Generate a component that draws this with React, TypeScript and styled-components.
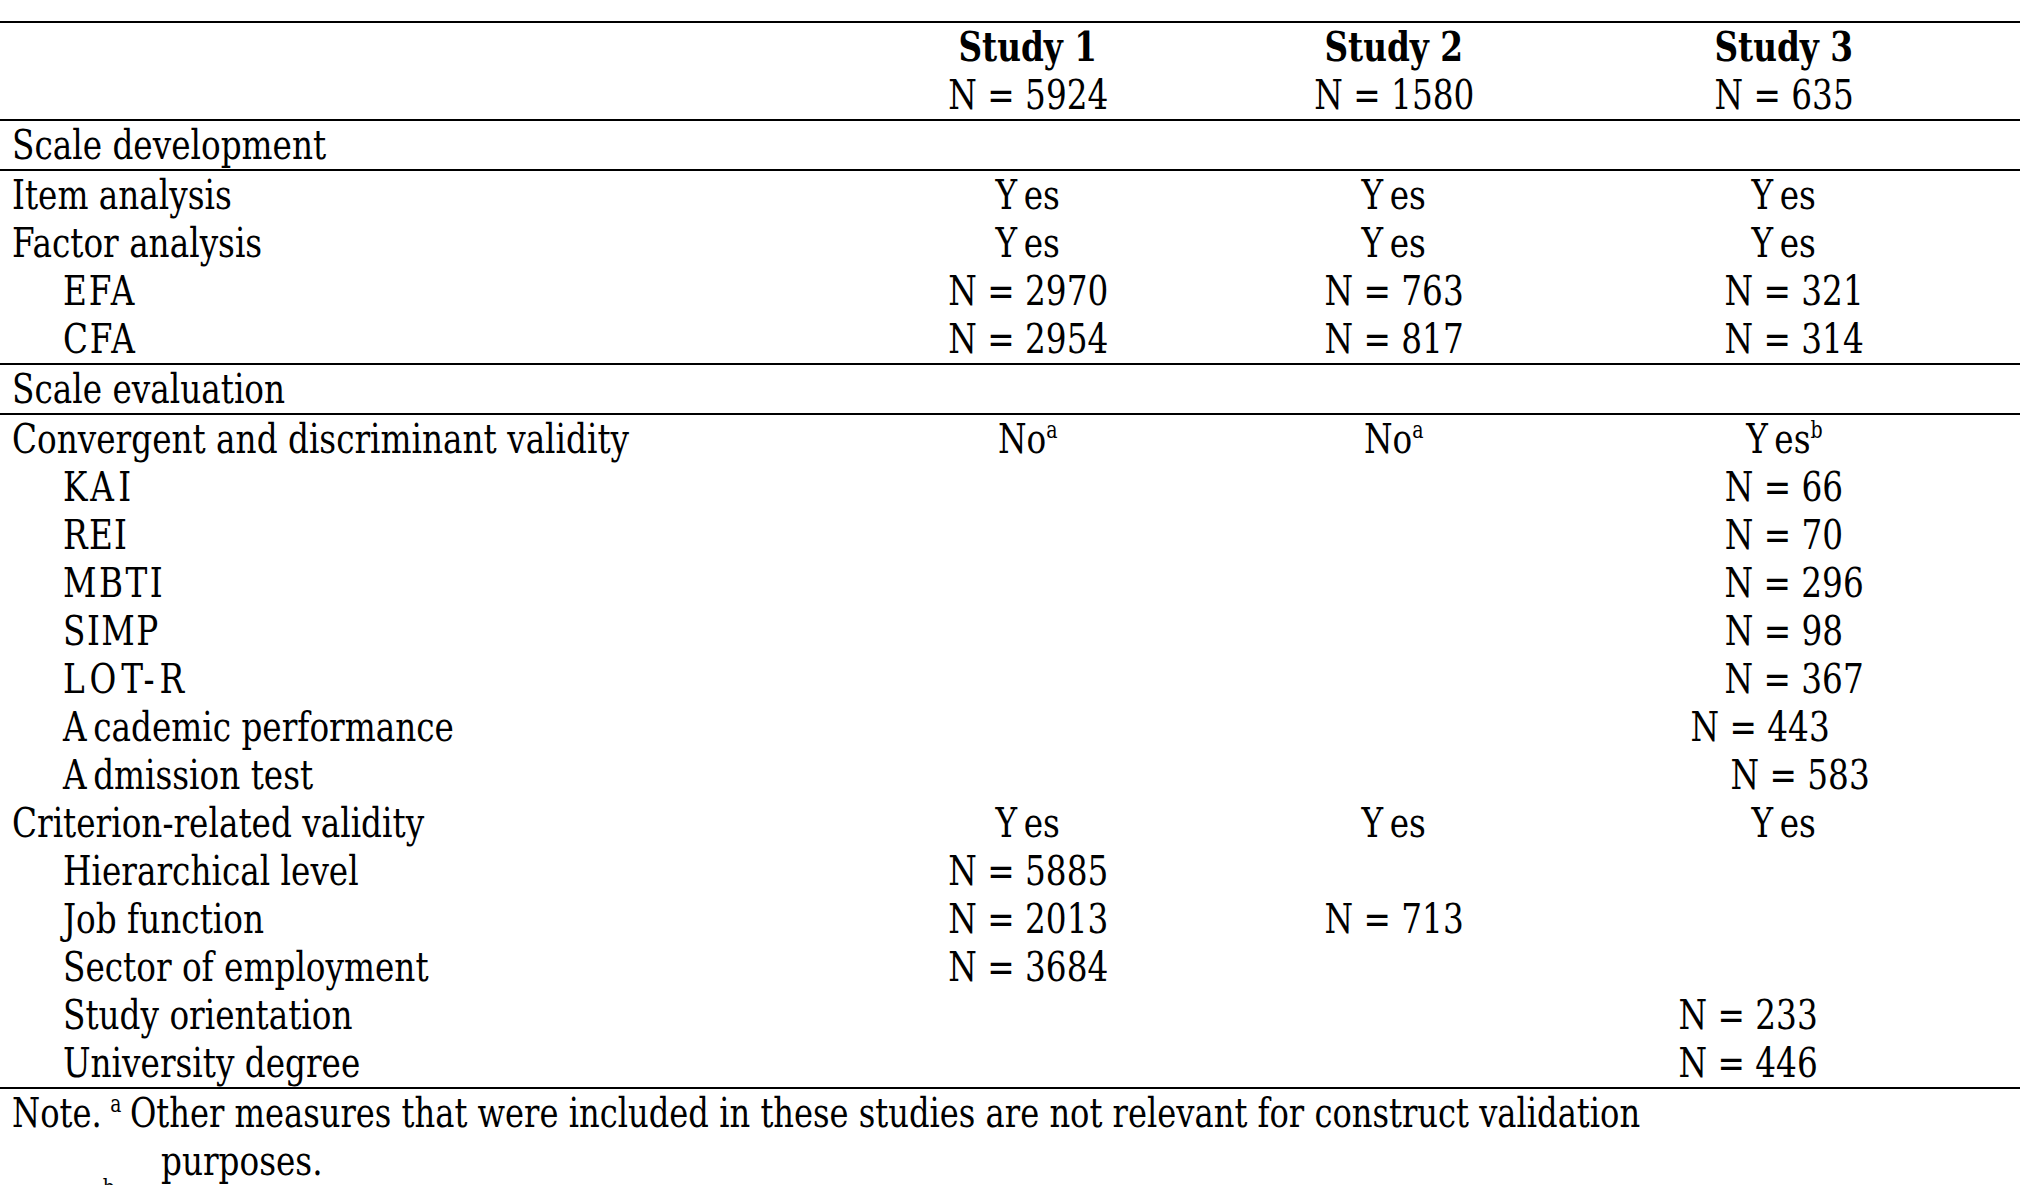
import React from "react";
import styled, { createGlobalStyle } from "styled-components";

// glyphs in the scan are DejaVu Serif squeezed onto Times widths
const SQUEEZE = 0.79;

type Val = { text: React.ReactNode; shift?: number } | null;

type Line = {
  label: React.ReactNode;
  sub?: boolean;
  spacing?: number;
  cells: Val[];
};

const GlobalStyle = createGlobalStyle`
  html, body {
    margin: 0;
    padding: 0;
    background: #ffffff;
  }
  body {
    font-family: "DejaVu Serif", "Liberation Serif", serif;
    color: #000000;
  }
`;

const Page = styled.div`
  padding-top: 21px;
  font-size: 41.4px;
  line-height: 48px;
`;

const Table = styled.div`
  border-top: 2px solid #000;
`;

const Block = styled.div`
  border-bottom: 2px solid #000;
`;

const Row = styled.div<{ $tall?: boolean }>`
  display: grid;
  grid-template-columns: 845px 366px 366px 414px 1fr;
  height: ${(p) => (p.$tall ? 96 : 48)}px;
`;

const Label = styled.div<{ $sub?: boolean; $spacing?: number }>`
  padding-left: ${(p) => (p.$sub ? 63 : 12)}px;
  letter-spacing: ${(p) => p.$spacing ?? 0}em;
  white-space: nowrap;
`;

const Cell = styled.div<{ $shift?: number }>`
  display: flex;
  justify-content: center;
  padding-left: ${(p) => Math.max(0, (p.$shift ?? 0) * 2)}px;
  padding-right: ${(p) => Math.max(0, -(p.$shift ?? 0) * 2)}px;
`;

const HeadCell = styled.div`
  display: flex;
  flex-direction: column;
  align-items: center;
`;

const Ink = styled.span<{ $from?: "left" | "center"; $squeeze?: number }>`
  display: inline-block;
  white-space: nowrap;
  transform: scaleX(${(p) => p.$squeeze ?? SQUEEZE});
  transform-origin: ${(p) => p.$from ?? "center"} center;
`;

const Bold = styled(Ink)`
  font-weight: 700;
`;

const Sup = styled.sup`
  font-size: 24px;
  line-height: 0;
  vertical-align: 15px;
`;

const Loose = styled.span`
  margin-right: 0.2em;
`;

const Notes = styled.div``;

const NoteLine = styled.div<{ $indent: number }>`
  padding-left: ${(p) => p.$indent}px;
  height: 48px;
  white-space: nowrap;
`;

const NoteMark = styled(Sup)<{ $raise?: number }>`
  margin-left: 11px;
  margin-right: 11px;
  vertical-align: ${(p) => p.$raise ?? 15}px;
`;

const yes = (
  <>
    <Loose>Y</Loose>es
  </>
);

const n = (v: number, shift?: number): Val => ({ text: `N = ${v}`, shift });

const studies = [
  { title: "Study 1", n: 5924 },
  { title: "Study 2", n: 1580 },
  { title: "Study 3", n: 635 },
];

const development: Line[] = [
  { label: "Item analysis", cells: [{ text: yes }, { text: yes }, { text: yes }] },
  { label: "Factor analysis", cells: [{ text: yes }, { text: yes }, { text: yes }] },
  { label: "EFA", sub: true, spacing: 0.06, cells: [n(2970), n(763), n(321, 10)] },
  { label: "CFA", sub: true, spacing: 0.05, cells: [n(2954), n(817), n(314, 10)] },
];

const evaluation: Line[] = [
  {
    label: "Convergent and discriminant validity",
    cells: [
      { text: <>No<Sup>a</Sup></> },
      { text: <>No<Sup>a</Sup></> },
      { text: <>{yes}<Sup>b</Sup></> },
    ],
  },
  { label: "KAI", sub: true, spacing: 0.13, cells: [null, null, n(66)] },
  { label: "REI", sub: true, spacing: 0.04, cells: [null, null, n(70)] },
  { label: "MBTI", sub: true, spacing: 0.076, cells: [null, null, n(296, 10)] },
  { label: "SIMP", sub: true, spacing: 0.046, cells: [null, null, n(98)] },
  { label: "LOT-R", sub: true, spacing: 0.147, cells: [null, null, n(367, 10)] },
  {
    label: <><Loose>A</Loose>cademic performance</>,
    sub: true,
    cells: [null, null, n(443, -24)],
  },
  {
    label: <><Loose>A</Loose>dmission test</>,
    sub: true,
    cells: [null, null, n(583, 16)],
  },
  { label: "Criterion-related validity", cells: [{ text: yes }, { text: yes }, { text: yes }] },
  { label: "Hierarchical level", sub: true, cells: [n(5885), null, null] },
  { label: "Job function", sub: true, cells: [n(2013), n(713), null] },
  { label: "Sector of employment", sub: true, cells: [n(3684), null, null] },
  { label: "Study orientation", sub: true, cells: [null, null, n(233, -36)] },
  { label: "University degree", sub: true, cells: [null, null, n(446, -36)] },
];

const Lines: React.FC<{ lines: Line[] }> = ({ lines }) => (
  <>
    {lines.map((line, i) => (
      <Row key={i}>
        <Label $sub={line.sub} $spacing={line.spacing}>
          <Ink $from="left">{line.label}</Ink>
        </Label>
        {line.cells.map((cell, j) => (
          <Cell key={j} $shift={cell?.shift}>
            {cell && <Ink>{cell.text}</Ink>}
          </Cell>
        ))}
      </Row>
    ))}
  </>
);

const Section: React.FC<{ title: string }> = ({ title }) => (
  <Block>
    <Row>
      <Label>
        <Ink $from="left">{title}</Ink>
      </Label>
    </Row>
  </Block>
);

const App: React.FC = () => {
  return (
    <>
      <GlobalStyle />
      <Page>
        <Table>
          <Block>
            <Row $tall>
              <div />
              {studies.map((s) => (
                <HeadCell key={s.title}>
                  <Bold>{s.title}</Bold>
                  <Ink>N = {s.n}</Ink>
                </HeadCell>
              ))}
            </Row>
          </Block>
          <Section title="Scale development" />
          <Block>
            <Lines lines={development} />
          </Block>
          <Section title="Scale evaluation" />
          <Block>
            <Lines lines={evaluation} />
          </Block>
        </Table>
        <Notes>
          <NoteLine $indent={12}>
            <Ink $from="left" $squeeze={0.777}>
              Note.
              <NoteMark>a</NoteMark>
              Other measures that were included in these studies are not relevant for construct validation
            </Ink>
          </NoteLine>
          <NoteLine $indent={161}>
            <Ink $from="left">purposes.</Ink>
          </NoteLine>
          <NoteLine $indent={94}>
            <Ink $from="left">
              <NoteMark $raise={27}>b</NoteMark>
            </Ink>
          </NoteLine>
        </Notes>
      </Page>
    </>
  );
};

export default App;
